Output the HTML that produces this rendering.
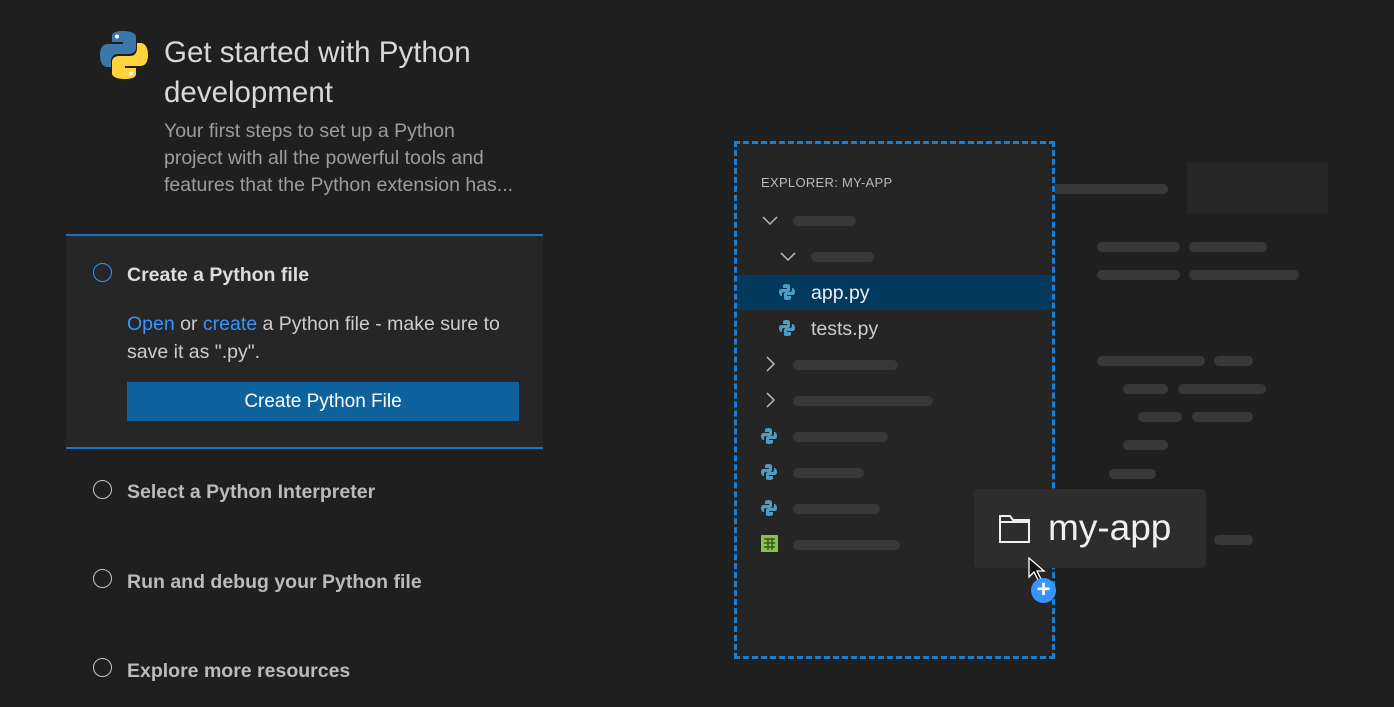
<!DOCTYPE html><html><head><style>
body{margin:0;width:1394px;height:707px;background:#1f1f1f;position:relative;overflow:hidden;font-family:"Liberation Sans",sans-serif;}
.a{position:absolute}
.b{position:absolute;height:10px;border-radius:5px;background:#383838}
.circ{position:absolute;width:19px;height:19px;border:1.5px solid #c5c5c5;border-radius:50%;box-sizing:border-box}
.step{position:absolute;left:127px;font-weight:bold;font-size:19.5px;color:#bbb}
.py{position:absolute;width:16px;height:16px}
</style></head><body>
<svg class="a" style="left:99px;top:30px" width="50" height="50" viewBox="0 0 50 50">
<path d="M24 1c-12 0-11 5-11 5v6h11v2H9S1 13 1 25s7 12 7 12h4v-6s0-7 7-7h11s7 0 7-6V7s1-6-13-6z" fill="#3b77a8"/>
<circle cx="18" cy="6.5" r="2" fill="#fff"/>
<path d="M26 49c12 0 11-5 11-5v-6H26v-2h15s8 1 8-11-7-12-7-12h-4v6s0 7-7 7H20s-7 0-7 6v11s-1 6 13 6z" fill="#ffd43b"/>
<circle cx="32" cy="43.5" r="2" fill="#fff"/>
</svg>
<div class="a" style="left:164px;top:33px;font-size:29.5px;line-height:40px;color:#d8d8d8">Get started with Python<br>development</div>
<div class="a" style="left:164px;top:118px;font-size:19.5px;line-height:27px;color:#9d9d9d">Your first steps to set up a Python<br>project with all the powerful tools and<br>features that the Python extension has...</div>
<div class="a" style="left:66px;top:234px;width:477px;height:211px;background:#262626;border-top:2px solid #1574c4;border-bottom:2px solid #1574c4"></div>
<div class="circ" style="left:93px;top:263px;border-color:#3794ff"></div>
<div class="step" style="top:264px;color:#ddd">Create a Python file</div>
<div class="a" style="left:127px;top:310px;font-size:19.5px;line-height:28px;color:#ccc"><span style="color:#3794ff">Open</span> or <span style="color:#3794ff">create</span> a Python file - make sure to<br>save it as ".py".</div>
<div class="a" style="left:127px;top:382px;width:392px;height:39px;background:#0e639c;color:#fff;font-size:19px;line-height:40px;text-align:center">Create Python File</div>
<div class="circ" style="left:93px;top:480px"></div><div class="step" style="top:481px">Select a Python Interpreter</div>
<div class="circ" style="left:93px;top:569px"></div><div class="step" style="top:571px">Run and debug your Python file</div>
<div class="circ" style="left:93px;top:658px"></div><div class="step" style="top:660px">Explore more resources</div>

<div class="a" style="left:1187px;top:163px;width:141px;height:50px;background:#262626"></div>
<div class="b" style="left:1050px;top:184px;width:118px"></div>
<div class="b" style="left:1097px;top:242px;width:83px"></div><div class="b" style="left:1189px;top:242px;width:78px"></div>
<div class="b" style="left:1097px;top:270px;width:83px"></div><div class="b" style="left:1189px;top:270px;width:110px"></div>
<div class="b" style="left:1097px;top:356px;width:108px"></div><div class="b" style="left:1214px;top:356px;width:39px"></div>
<div class="b" style="left:1123px;top:384px;width:45px"></div><div class="b" style="left:1178px;top:384px;width:88px"></div>
<div class="b" style="left:1138px;top:412px;width:44px"></div><div class="b" style="left:1192px;top:412px;width:61px"></div>
<div class="b" style="left:1123px;top:440px;width:45px"></div>
<div class="b" style="left:1109px;top:469px;width:47px"></div>
<div class="b" style="left:1214px;top:535px;width:39px"></div>

<div class="a" style="left:734px;top:141px;width:321px;height:518px;box-sizing:border-box;border:3px dashed #1a7fd4;background:#252526"></div>
<div class="a" style="left:761px;top:175px;font-size:13px;color:#bbb;letter-spacing:.3px">EXPLORER: MY-APP</div>
<div class="a" style="left:737px;top:275px;width:315px;height:35px;background:#04395e"></div>
<svg class="a" style="left:761px;top:213px" width="18" height="14"><path d="M2 4l7 7 7-7" stroke="#bbb" stroke-width="1.5" fill="none"/></svg>
<div class="b" style="left:793px;top:216px;width:63px"></div>
<svg class="a" style="left:779px;top:249px" width="18" height="14"><path d="M2 4l7 7 7-7" stroke="#bbb" stroke-width="1.5" fill="none"/></svg>
<div class="b" style="left:811px;top:252px;width:63px"></div>
<svg class="a" style="left:763px;top:355px" width="14" height="18"><path d="M4 2l7 7-7 7" stroke="#bbb" stroke-width="1.5" fill="none"/></svg>
<div class="b" style="left:793px;top:360px;width:105px"></div>
<svg class="a" style="left:763px;top:391px" width="14" height="18"><path d="M4 2l7 7-7 7" stroke="#bbb" stroke-width="1.5" fill="none"/></svg>
<div class="b" style="left:793px;top:396px;width:140px"></div>
<div class="b" style="left:793px;top:432px;width:95px"></div>
<div class="b" style="left:793px;top:468px;width:71px"></div>
<div class="b" style="left:793px;top:504px;width:87px"></div>
<div class="b" style="left:793px;top:540px;width:107px"></div>
<svg width="0" height="0" style="position:absolute"><defs><g id="p"><path d="M8 0C3 0 4 2 4 2v2h4v1H2S0 5 0 8s2 4 2 4h1v-2s0-2 2-2h4s2 0 2-2V2S11 0 8 0z" fill="#4d9cc4"/><path d="M8 16c5 0 4-2 4-2v-2H8v-1h6s2 0 2-3-2-4-2-4h-1v2s0 2-2 2H7s-2 0-2 2v4s-1 2 3 2z" fill="#4d9cc4"/></g></defs></svg>
<svg class="py" style="left:779px;top:284px"><use href="#p"/></svg>
<svg class="py" style="left:779px;top:320px"><use href="#p"/></svg>
<svg class="py" style="left:761px;top:428px"><use href="#p"/></svg>
<svg class="py" style="left:761px;top:464px"><use href="#p"/></svg>
<svg class="py" style="left:761px;top:500px"><use href="#p"/></svg>
<svg class="a" style="left:761px;top:535px" width="17" height="17"><rect width="17" height="17" fill="#8bc34a"/><path d="M3 4h11M3 8h11M3 12h11M7 3v12M11 3v12" stroke="#3a5a1a" stroke-width="1.5"/></svg>
<div class="a" style="left:811px;top:282px;font-size:19.5px;color:#eee">app.py</div>
<div class="a" style="left:811px;top:318px;font-size:19.5px;color:#ccc">tests.py</div>

<div class="a" style="left:974px;top:489px;width:232px;height:79px;background:#2d2d2d;border-radius:4px"></div>
<svg class="a" style="left:998px;top:514px" width="34" height="30"><path d="M2 2h10l3 4h16v22H2z M2 8h29" stroke="#eee" stroke-width="2" fill="none"/></svg>
<div class="a" style="left:1048px;top:507px;font-size:37px;color:#f0f0f0">my-app</div>
<svg class="a" style="left:1026px;top:556px" width="22" height="26"><path d="M3 2v19l5-5 4 8 3-1-4-8 7 0z" fill="#111" stroke="#fff" stroke-width="1.3"/></svg>
<div class="a" style="left:1031px;top:578px;width:25px;height:25px;border-radius:50%;background:#3794ff;color:#fff;font-size:24px;font-weight:bold;line-height:24px;text-align:center">+</div>
</body></html>
